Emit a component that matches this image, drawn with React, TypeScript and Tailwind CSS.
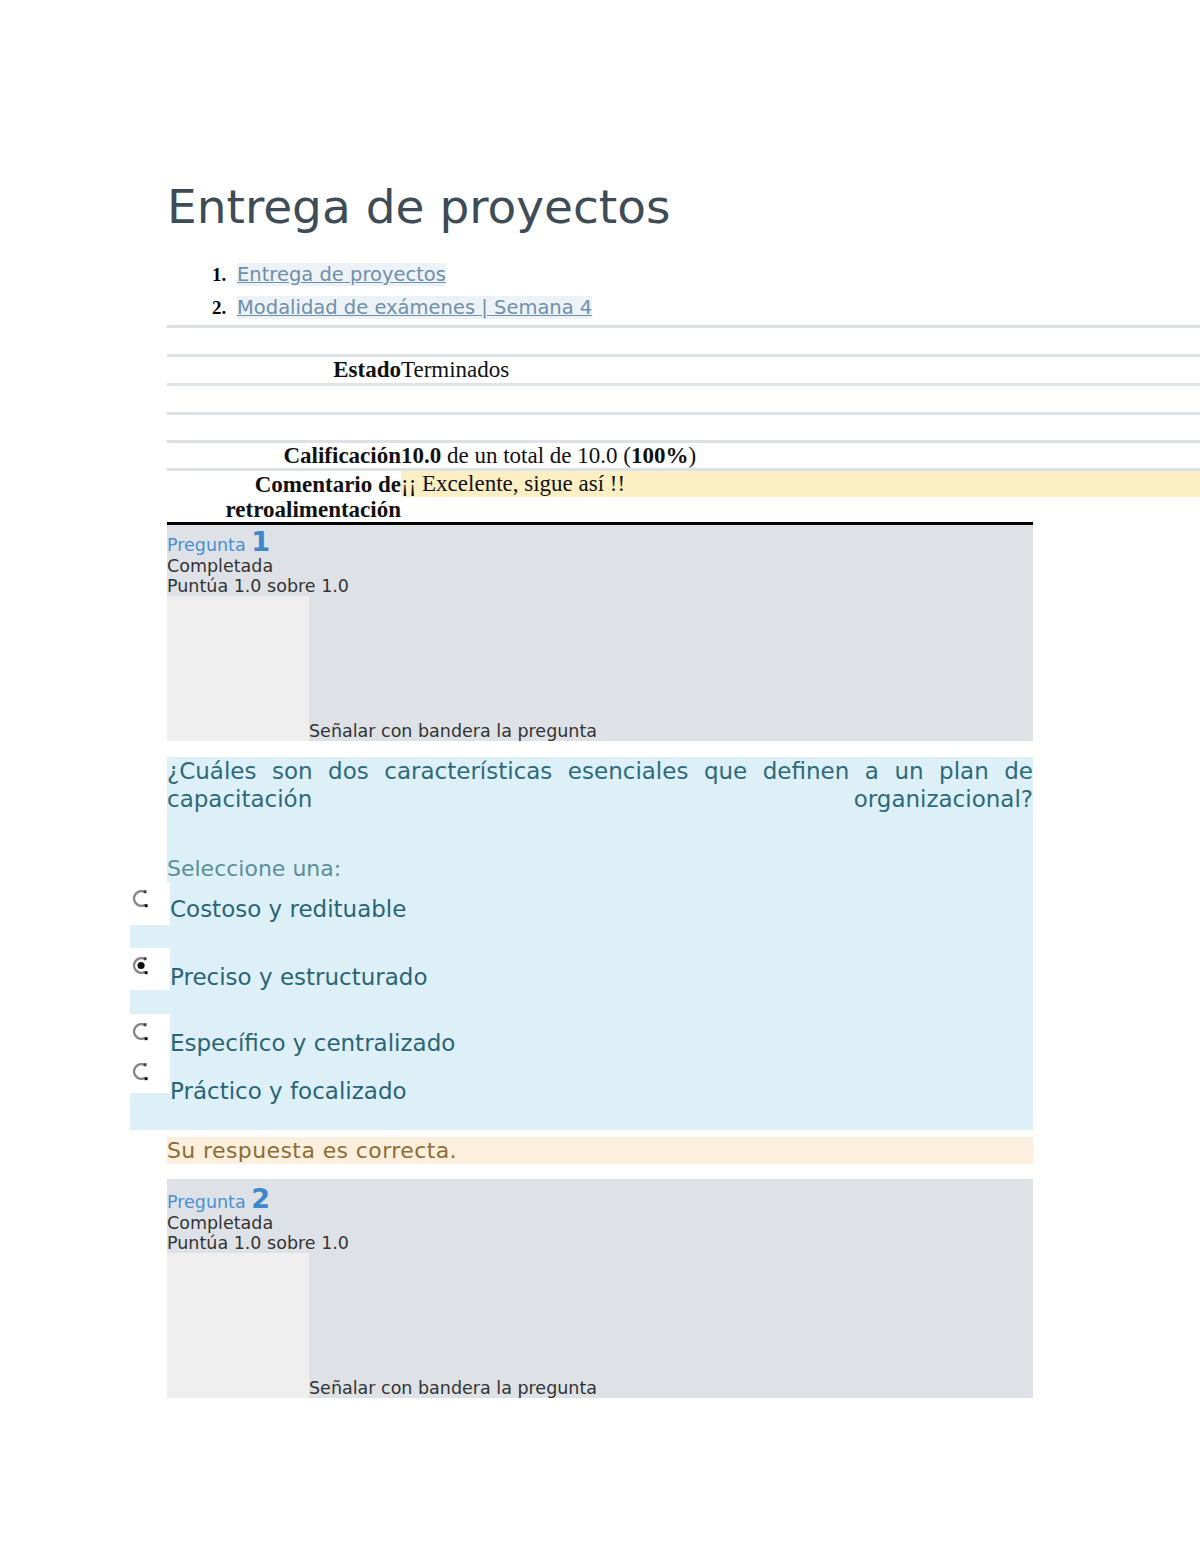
import React from "react";

function Radio({ checked }: { checked?: boolean }) {
  return (
    <svg width="19" height="19" viewBox="0 0 18 18">
      <path d="M12.5 2.94A7 7 0 1 0 12.5 15.06" fill="none" stroke="#858585" strokeWidth="2.3" />
      <rect x="11.2" y="1.2" width="2.6" height="2.8" fill="#444" />
      <rect x="12" y="14.4" width="2.8" height="2.8" fill="#111" />
      {checked && <circle cx="8.6" cy="9" r="3.4" fill="#111" />}
    </svg>
  );
}

function QInfo({ n, top }: { n: string; top?: boolean }) {
  return (
    <div
      className={`w-[866px] bg-[#dee2e6] font-['DejaVu_Sans',sans-serif] ${
        top ? "border-t-[3px] border-black" : "pt-[3px]"
      }`}
    >
      <div className="h-[31px] pt-[4px] leading-[26px] text-[17.5px]">
        <span className="text-[#4a8fd4]">Pregunta </span>
        <span className="text-[27px] font-bold text-[#3d87cb]">{n}</span>
      </div>
      <div className="leading-[20px] text-[17.5px] text-[#333]">Completada</div>
      <div className="leading-[20px] text-[17.5px] text-[#333]">Puntúa 1.0 sobre 1.0</div>
      <div className="flex items-end h-[145px]">
        <div className="w-[142px] h-full bg-[#efefef]" />
        <div className="leading-[20px] text-[17.5px] text-[#333]">
          Señalar con bandera la pregunta
        </div>
      </div>
    </div>
  );
}

const options = [
  { label: "Costoso y redituable", h: "h-[65px]", pt: "pt-[12px]", rt: "pt-[6px]", checked: false, box: "h-[42px]" },
  { label: "Preciso y estructurado", h: "h-[66px]", pt: "pt-[15px]", rt: "pt-[8px]", checked: true, box: "h-[42px]" },
  { label: "Específico y centralizado", h: "h-[41px]", pt: "pt-[15px]", rt: "pt-[8px]", checked: false, box: "h-[41px]" },
  { label: "Práctico y focalizado", h: "h-[75px]", pt: "pt-[22px]", rt: "pt-[7px]", checked: false, box: "h-[38px]" },
];

export default function App() {
  return (
    <div className="min-h-[1553px] bg-white pl-[167px] pt-[179px] overflow-hidden">
      <h1 className="font-['DejaVu_Sans',sans-serif] text-[47px] leading-[56px] text-[#3e4c57] font-normal">
        Entrega de proyectos
      </h1>

      <ol className="mt-[23px]">
        <li className="leading-[33px] h-[33px] pl-[45px]">
          <span className="inline-block w-[25px] font-['Liberation_Serif',serif] font-bold text-[19px] text-black">1.</span>
          <span className="font-['DejaVu_Sans',sans-serif] text-[19.5px] text-[#6f8fab] underline bg-[#edf2f7]">
            Entrega de proyectos
          </span>
        </li>
        <li className="leading-[33px] h-[33px] pl-[45px]">
          <span className="inline-block w-[25px] font-['Liberation_Serif',serif] font-bold text-[19px] text-black">2.</span>
          <span className="font-['DejaVu_Sans',sans-serif] text-[19.5px] text-[#6f8fab] underline bg-[#edf2f7]">
            Modalidad de exámenes | Semana 4
          </span>
        </li>
      </ol>

      <div className="mt-[1px] font-['Liberation_Serif',serif] text-[23px] text-[#111]">
        <div className="flex items-center h-[29px] border-t-[3px] border-[#dee2e6]" />
        <div className="flex items-center h-[29px] border-t-[3px] border-[#dee2e6] leading-[26px]">
          <div className="w-[234px] text-right font-bold">Estado</div>
          <div>Terminados</div>
        </div>
        <div className="flex items-center h-[29px] border-t-[3px] border-[#dee2e6]" />
        <div className="flex items-center h-[28px] border-t-[3px] border-[#dee2e6]" />
        <div className="flex items-center h-[28px] border-t-[3px] border-[#dee2e6] leading-[25px]">
          <div className="w-[234px] text-right font-bold">Calificación</div>
          <div>
            <b>10.0</b> de un total de 10.0 (<b>100%</b>)
          </div>
        </div>
        <div className="flex items-start border-t-[3px] border-[#dee2e6]">
          <div className="w-[234px] text-right font-bold pt-[1px] leading-[25px]">Comentario de retroalimentación</div>
          <div className="flex-1 bg-[#fdefc4] leading-[26px]">¡¡ Excelente, sigue así !!</div>
        </div>
      </div>

      <QInfo n="1" top />

      <div className="mt-[16px] w-[866px] bg-[#def0f7] font-['DejaVu_Sans',sans-serif]">
        <p className="text-[23px] leading-[28px] text-[#2d6a7b] text-justify [text-align-last:justify]">
          ¿Cuáles son dos características esenciales que definen a un plan de capacitación organizacional?
        </p>
        <p className="mt-[42px] text-[22px] leading-[28px] text-[#5b8e9d]">Seleccione una:</p>
        <div className="-ml-[37px] w-[903px] bg-[#def0f7]">
          {options.map((o) => (
            <div key={o.label} className={`flex items-start ${o.h}`}>
              <div className={`w-[40px] bg-white pl-[2px] ${o.box} ${o.rt}`}>
                <Radio checked={o.checked} />
              </div>
              <div className={`text-[23px] leading-[28px] text-[#2a6577] ${o.pt}`}>{o.label}</div>
            </div>
          ))}
        </div>
      </div>

      <div className="mt-[7px] w-[866px] h-[27px] bg-[#fcefdd] font-['DejaVu_Sans',sans-serif] text-[22px] leading-[27px] tracking-[0.4px] text-[#8e6d35]">
        Su respuesta es correcta.
      </div>

      <div className="mt-[15px]">
        <QInfo n="2" />
      </div>
    </div>
  );
}
